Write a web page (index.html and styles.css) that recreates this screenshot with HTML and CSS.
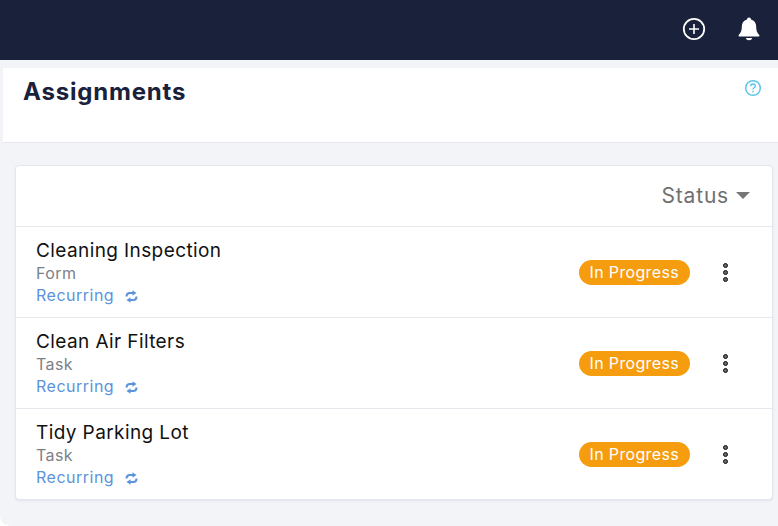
FILE: index.html
```html
<!DOCTYPE html>
<html lang="en">
<head>
  <meta charset="UTF-8">
  <title>Assignments</title>
  <link rel="stylesheet" href="styles.css">
</head>
<body>

  <div class="topbar">
    <svg class="add-icon" width="24" height="24" viewBox="0 0 24 24" fill="none" stroke="#fff">
      <circle cx="12" cy="12" r="10.2" stroke-width="1.8"/>
      <path d="M12 7v10M7 12h10" stroke-width="1.6"/>
    </svg>
    <svg class="bell-icon" width="24" height="26" viewBox="0 0 24 26" fill="#fff">
      <path d="M12 1.5c1.2 0 2 .8 2 1.900 3.400.9 5.200 3.600 5.200 7.200 0 4.600 1.200 6.500 3 8.300.5.500.2 1.600-.7 1.600H2.500c-.9 0-1.200-1.100-.7-1.600 1.800-1.800 3-3.700 3-8.300 0-3.600 1.800-6.300 5.200-7.200 0-1.100.8-1.900 2-1.900z"/>
      <path d="M9 22h6c0 1.300-1.300 2.300-3 2.300S9 23.300 9 22z"/>
    </svg>
  </div>

  <div class="panel">
    <div class="title-card">
      <h1>Assignments</h1>
      <svg class="help-icon" width="18" height="18" viewBox="0 0 18 18" fill="none" stroke="#5cc6ea">
        <circle cx="9" cy="9" r="7.300" stroke-width="1.500"/>
        <path d="M6.700 7.200c0-1.400 1-2.200 2.300-2.200s2.300.8 2.300 2c0 1.700-2.300 1.700-2.300 3.400" stroke-width="1.400"/>
        <path d="M9 11.800v1.500" stroke-width="1.500"/>
      </svg>
    </div>

    <div class="list-card">
      <div class="list-head">
        <span class="status-filter">Status</span>
        <span class="caret"></span>
      </div>

      <div class="row">
        <div class="row-info">
          <div class="row-name">Cleaning Inspection</div>
          <div class="row-type">Form</div>
          <div class="row-recur">Recurring
            <svg class="recur-icon" width="13" height="13" viewBox="0 0 13 13" fill="none" stroke="#5b93dc" stroke-width="2">
              <path d="M1.500 6.500C1.500 4.300 2.700 3 4.800 3H8"/>
              <path d="M7.500 .2L11.500 3 7.500 5.800z" fill="#5b93dc" stroke="none"/>
              <path d="M11.500 6.500c0 2.200-1.200 3.500-3.300 3.500H5"/>
              <path d="M5.500 7.200L1.500 10l4 2.800z" fill="#5b93dc" stroke="none"/>
            </svg>
          </div>
        </div>
        <span class="badge">In Progress</span>
        <div class="kebab"><i></i><i></i><i></i></div>
      </div>

      <div class="row">
        <div class="row-info">
          <div class="row-name">Clean Air Filters</div>
          <div class="row-type">Task</div>
          <div class="row-recur">Recurring
            <svg class="recur-icon" width="13" height="13" viewBox="0 0 13 13" fill="none" stroke="#5b93dc" stroke-width="2">
              <path d="M1.500 6.500C1.500 4.300 2.700 3 4.800 3H8"/>
              <path d="M7.500 .2L11.500 3 7.500 5.800z" fill="#5b93dc" stroke="none"/>
              <path d="M11.500 6.500c0 2.200-1.200 3.500-3.300 3.500H5"/>
              <path d="M5.500 7.200L1.500 10l4 2.800z" fill="#5b93dc" stroke="none"/>
            </svg>
          </div>
        </div>
        <span class="badge">In Progress</span>
        <div class="kebab"><i></i><i></i><i></i></div>
      </div>

      <div class="row">
        <div class="row-info">
          <div class="row-name">Tidy Parking Lot</div>
          <div class="row-type">Task</div>
          <div class="row-recur">Recurring
            <svg class="recur-icon" width="13" height="13" viewBox="0 0 13 13" fill="none" stroke="#5b93dc" stroke-width="2">
              <path d="M1.500 6.500C1.500 4.300 2.700 3 4.800 3H8"/>
              <path d="M7.500 .2L11.500 3 7.500 5.800z" fill="#5b93dc" stroke="none"/>
              <path d="M11.500 6.500c0 2.200-1.200 3.500-3.300 3.500H5"/>
              <path d="M5.500 7.200L1.500 10l4 2.800z" fill="#5b93dc" stroke="none"/>
            </svg>
          </div>
        </div>
        <span class="badge">In Progress</span>
        <div class="kebab"><i></i><i></i><i></i></div>
      </div>
    </div>
  </div>

</body>
</html>
```

FILE: styles.css
```css
html, body {
  height: 100%;
}

body {
  margin: 0;
  background: #fff;
  font-family: Inter, "Liberation Sans", sans-serif;
  overflow: hidden;
}

.topbar {
  height: 60px;
  background: #19223a;
  display: flex;
  align-items: center;
  justify-content: flex-end;
  padding: 0 17px 2px 0;
  gap: 31px;
  box-sizing: border-box;
}

.panel {
  height: 466px;
  box-sizing: border-box;
  padding: 8px 0 0 3px;
  background: #f2f4f8;
  border-bottom-left-radius: 10px;
}

.title-card {
  height: 75px;
  box-sizing: border-box;
  background: #fff;
  border-bottom: 1px solid #e6e8ee;
  padding: 9px 16px 0 20px;
  display: flex;
  justify-content: space-between;
  align-items: flex-start;
}

h1 {
  margin: 0;
  font-size: 24px;
  line-height: 30px;
  font-weight: 700;
  letter-spacing: 0.8px;
  color: #19223a;
}

.help-icon {
  margin-top: 2px;
}

.list-card {
  margin: 22px 5px 0 12px;
  background: #fff;
  border: 1px solid #e4e6ec;
  border-radius: 4px;
  box-shadow: 0 1px 2px rgba(25, 34, 58, 0.08);
}

.list-head {
  height: 60px;
  display: flex;
  align-items: center;
  justify-content: flex-end;
  padding: 0 22px 1px 0;
  box-sizing: border-box;
  gap: 7px;
}

.status-filter {
  font-size: 21px;
  letter-spacing: 0.8px;
  color: #6f6f6f;
}

.caret {
  width: 0;
  height: 0;
  border-left: 7px solid transparent;
  border-right: 7px solid transparent;
  border-top: 7px solid #777;
}

.row {
  height: 91px;
  box-sizing: border-box;
  border-top: 1px solid #e6e8ee;
  padding: 0 44px 0 20px;
  display: flex;
  align-items: center;
}

.row-info {
  flex: 1;
  padding-top: 1px;
}

.row-name {
  font-size: 19px;
  line-height: 24px;
  letter-spacing: 0.4px;
  color: #111;
}

.row-type {
  font-size: 16px;
  line-height: 21px;
  letter-spacing: 0.4px;
  color: #7c7f88;
}

.row-recur {
  font-size: 16px;
  line-height: 22px;
  letter-spacing: 0.5px;
  color: #5b93dc;
}

.recur-icon {
  margin-left: 6px;
  vertical-align: -2px;
}

.badge {
  height: 25px;
  line-height: 25px;
  padding: 0 11px;
  border-radius: 13px;
  background: #f59c0f;
  color: #fff;
  font-size: 16px;
  letter-spacing: 0.35px;
}

.kebab {
  margin-left: 33px;
  display: flex;
  flex-direction: column;
  gap: 2px;
}

.kebab i {
  width: 5px;
  height: 5px;
  box-sizing: border-box;
  border: 1px solid #111;
  border-radius: 50%;
  background: #666;
}
```
